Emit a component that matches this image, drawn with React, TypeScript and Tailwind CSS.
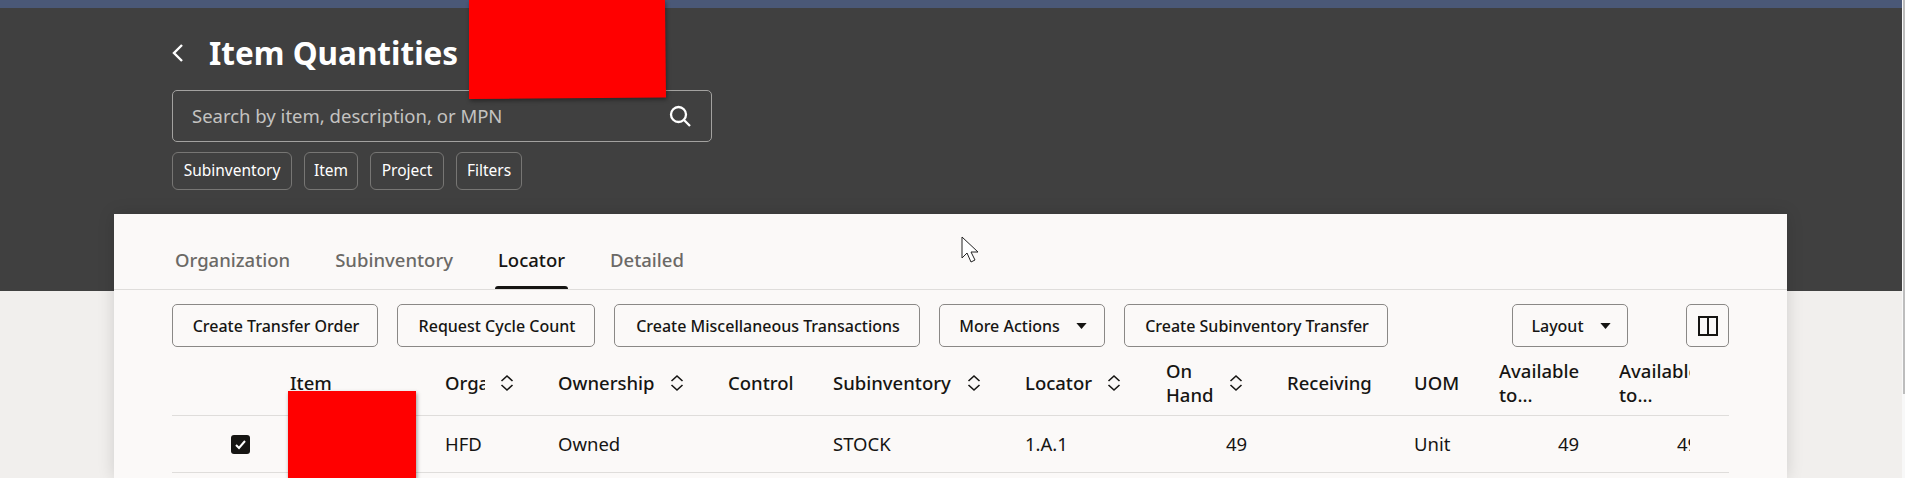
import React from "react";

const Sort = () => (
  <svg width="14" height="18" viewBox="0 0 14 18" fill="none" stroke="#161513" strokeWidth="1.6" className="shrink-0">
    <path d="M1.5 7 7 2l5.500 5" />
    <path d="M1.5 11 7 16l5.500-5" />
  </svg>
);
const Caret = () => (
  <svg width="11" height="6" viewBox="0 0 12 7" className="shrink-0"><path d="M0 0h12L6 7z" fill="#161513" /></svg>
);
const Btn = ({ w, children }: { w: string; children: React.ReactNode }) => (
  <button className={`${w} h-[43px] shrink-0 rounded-[5px] border border-[#8a8886] flex items-center justify-center gap-4 pl-[2px] text-[16px] font-medium text-[#161513]`}>
    {children}
  </button>
);

export default function App() {
  return (
    <div className="relative h-[478px] overflow-hidden bg-[#f1efed] font-['Noto_Sans',sans-serif] text-[#161513]">
      <div className="h-2 bg-[#4a5877]" />
      <div className="h-[283px] bg-[#404040] pl-[172px] pr-[3px]">
        <div className="flex h-[82px] items-center pt-2">
          <svg width="12" height="20" viewBox="0 0 12 20" fill="none" stroke="#fff" strokeWidth="2.4"><path d="M10 2 2 10l8 8" /></svg>
          <h1 className="ml-[25px] text-[31.5px] font-bold leading-none text-white">Item Quantities</h1>
        </div>
        <div className="flex h-[52px] w-[540px] items-center justify-between rounded-[5px] border border-[#a3a2a0] pl-[19px] pr-[20px] text-[18.5px] text-[#c4c3c1]">
          <span>Search by item, description, or MPN</span>
          <svg width="22" height="22" viewBox="0 0 22 22" fill="none" stroke="#fff" strokeWidth="2.3"><circle cx="9.5" cy="9.5" r="7.5" /><path d="m15 15 6 6" /></svg>
        </div>
        <div className="mt-[10px] flex gap-[12px] text-[15.5px] text-white">
          <span className="flex h-[38px] w-[120px] items-center justify-center rounded-[6px] border border-[#777674]">Subinventory</span>
          <span className="flex h-[38px] w-[54px] items-center justify-center rounded-[6px] border border-[#777674]">Item</span>
          <span className="flex h-[38px] w-[74px] items-center justify-center rounded-[6px] border border-[#777674]">Project</span>
          <span className="flex h-[38px] w-[66px] items-center justify-center rounded-[6px] border border-[#777674]">Filters</span>
        </div>
      </div>

      <div className="absolute left-[114px] top-[214px] h-[264px] w-[1673px] bg-[#fbf9f8] shadow-[0_0_16px_rgba(0,0,0,0.14)]">
        <div className="flex h-[76px] items-end gap-[45px] border-b border-[#dfdddb] pb-[16px] pl-[61px] text-[18.5px] font-medium leading-[26px] text-[#6b6966]">
          <span>Organization</span>
          <span>Subinventory</span>
          <span className="relative text-[#161513]">
            Locator
            <span className="absolute -bottom-[16px] -left-[3px] -right-[3px] h-[3px] rounded-t-[3px] bg-[#161513]" />
          </span>
          <span>Detailed</span>
        </div>
        <div className="mx-[58px] mt-[14px] flex h-[43px] gap-[19px]">
          <Btn w="w-[206px]">Create Transfer Order</Btn>
          <Btn w="w-[198px]">Request Cycle Count</Btn>
          <Btn w="w-[306px]">Create Miscellaneous Transactions</Btn>
          <Btn w="w-[166px]">More Actions<Caret /></Btn>
          <Btn w="w-[264px]">Create Subinventory Transfer</Btn>
          <div className="flex-1" />
          <Btn w="w-[116px]">Layout<Caret /></Btn>
          <button className="ml-[39px] flex h-[43px] w-[43px] shrink-0 items-center justify-center rounded-[5px] border border-[#8a8886]">
            <svg width="20" height="20" viewBox="0 0 20 20" fill="none" stroke="#161513" strokeWidth="2"><rect x="1" y="1" width="18" height="18" /><path d="M10 1v18" /></svg>
          </button>
        </div>
        <div className="mx-[58px] overflow-hidden">
          <div className="grid h-[69px] grid-cols-[118px_155px_113px_170px_105px_192px_141px_121px_127px_85px_120px_71px] items-center border-b border-[#dfdddb] pt-[3px] text-[18.5px] font-medium leading-[24px]">
            <span />
            <span>Item</span>
            <span className="flex items-center gap-[15px]"><span className="w-[40px] overflow-hidden">Organization</span><Sort /></span>
            <span className="flex items-center gap-[15px]">Ownership<Sort /></span>
            <span>Control</span>
            <span className="flex items-center gap-[16px]">Subinventory<Sort /></span>
            <span className="flex items-center gap-[15px]">Locator<Sort /></span>
            <span className="flex items-center gap-[14px]"><span className="w-[49px]">On Hand</span><Sort /></span>
            <span>Receiving</span>
            <span>UOM</span>
            <span className="w-[90px]">Available to...</span>
            <span className="w-[71px] overflow-hidden"><span className="block w-[90px]">Available to...</span></span>
          </div>
          <div className="grid h-[57px] grid-cols-[118px_155px_113px_170px_105px_192px_141px_121px_127px_85px_120px_71px] items-center border-b border-[#dfdddb] text-[18.5px]">
            <span className="pl-[59px]">
              <span className="flex h-[19px] w-[19px] items-center justify-center rounded-[3px] bg-[#161513]">
                <svg width="13" height="13" viewBox="0 0 13 13" fill="none" stroke="#fff" strokeWidth="2"><path d="m2 7 3 3 6-7" /></svg>
              </span>
            </span>
            <span />
            <span>HFD</span>
            <span>Owned</span>
            <span />
            <span>STOCK</span>
            <span>1.A.1</span>
            <span className="pl-[60px]">49</span>
            <span />
            <span>Unit</span>
            <span className="pl-[59px]">49</span>
            <span className="overflow-hidden pl-[58px]">49</span>
          </div>
        </div>
      </div>

      <svg className="absolute left-[469px] top-0 drop-shadow-[1px_2px_2px_rgba(0,0,0,0.4)]" width="200" height="104" viewBox="0 0 200 104">
        <path d="M0 0h196l1 97.500L0 99z" fill="#ff0000" />
      </svg>
      <div className="absolute left-[288px] top-[391px] h-[87px] w-[128px] bg-[#ff0000] shadow-[1px_2px_4px_rgba(0,0,0,0.4)]" />
      <svg className="absolute left-[961px] top-[236px]" width="19" height="28" viewBox="0 0 19 28">
        <path d="M1 1v21l5-5 4 9 4-2-4-8h7z" fill="#fff" stroke="#222" strokeWidth="1" />
      </svg>
      <div className="absolute right-0 top-0 h-full w-[3px] bg-[#f8f8f8]">
        <div className="ml-auto h-[394px] w-[2px] bg-[#bdbdbd]" />
      </div>
    </div>
  );
}
